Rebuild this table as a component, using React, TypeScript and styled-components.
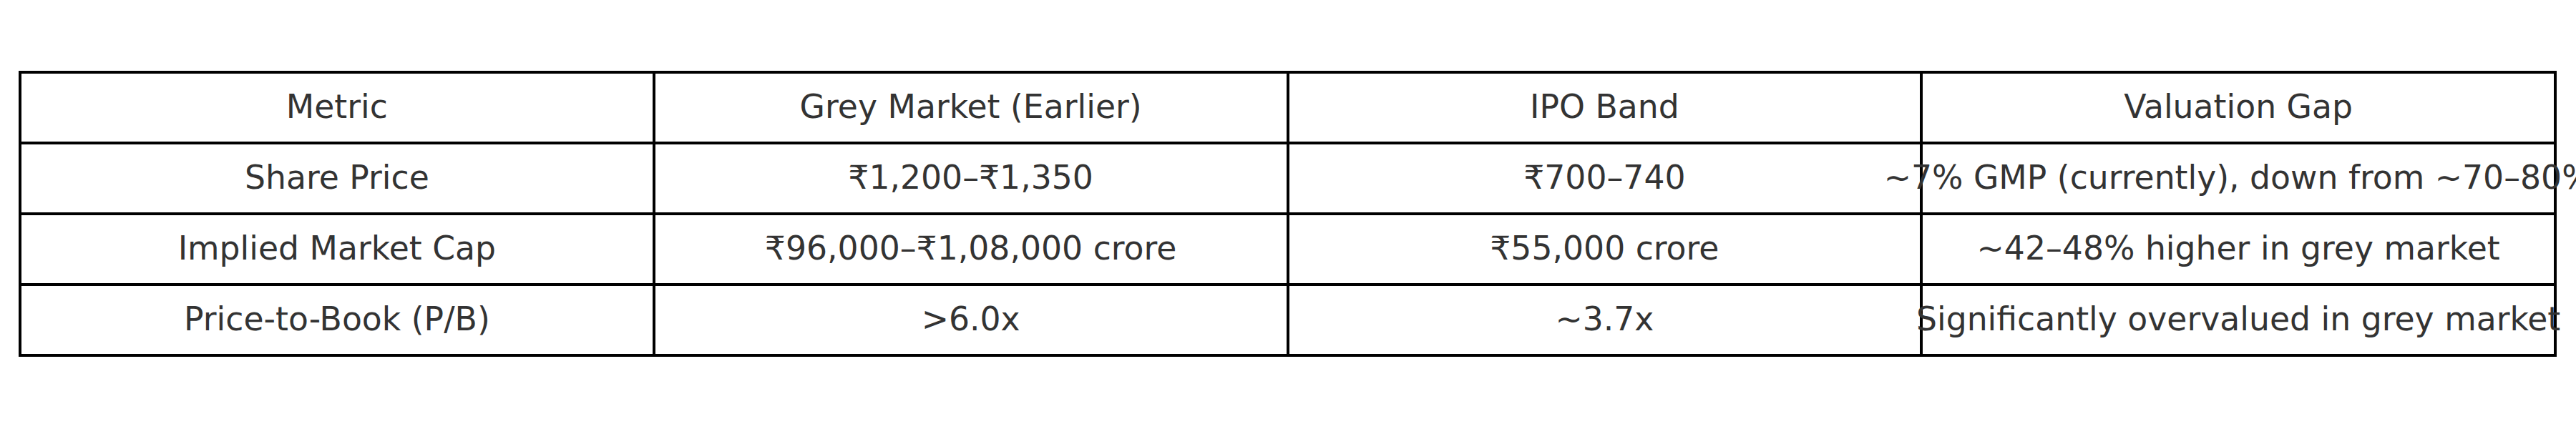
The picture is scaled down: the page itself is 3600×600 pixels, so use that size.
import { FC } from "react";
import styled, { createGlobalStyle } from "styled-components";

const GlobalStyle = createGlobalStyle`
    html, body {
        margin: 0;
        padding: 0;
        background: #fff;
    }
`

interface IRow {
    metric: string
    grey: string
    band: string
    gap: string
}

const header: IRow = {
    metric: "Metric",
    grey: "Grey Market (Earlier)",
    band: "IPO Band",
    gap: "Valuation Gap",
}

const rows: IRow[] = [
    { metric: "Share Price", grey: "₹1,200–₹1,350", band: "₹700–740", gap: "~7% GMP (currently), down from ~70–80%" },
    { metric: "Implied Market Cap", grey: "₹96,000–₹1,08,000 crore", band: "₹55,000 crore", gap: "~42–48% higher in grey market" },
    { metric: "Price-to-Book (P/B)", grey: ">6.0x", band: "~3.7x", gap: "Significantly overvalued in grey market" },
]

const App: FC = () => {
    const all = [header, ...rows]
    return (
        <Page>
            <GlobalStyle />
            <Table>
                <tbody>
                    {
                        all.map((r, index) => (
                            <Tr key={index}>
                                <Td><Text>{r.metric}</Text></Td>
                                <Td><Text>{r.grey}</Text></Td>
                                <Td><Text>{r.band}</Text></Td>
                                <Td><Text>{r.gap}</Text></Td>
                            </Tr>
                        ))
                    }
                </tbody>
            </Table>
        </Page>
    )
}

export default App


const Page = styled.div`
    width: 3600px;
    height: 600px;
    box-sizing: border-box;
    padding: 99px 0 0 26px;
    background: #fff;
`

const Table = styled.table`
    border-collapse: collapse;
    table-layout: fixed;
    width: 3547px;
    border: 4px solid #000;
`

const Tr = styled.tr`
    height: 99px;
`

const Td = styled.td`
    width: 25%;
    padding: 0;
    border: 4px solid #000;
    vertical-align: middle;
`

const Text = styled.div`
    display: flex;
    justify-content: center;
    white-space: nowrap;
    font-family: "DejaVu Sans", sans-serif;
    font-size: 45.7px;
    color: #333;
    margin-top: -3px;
`
